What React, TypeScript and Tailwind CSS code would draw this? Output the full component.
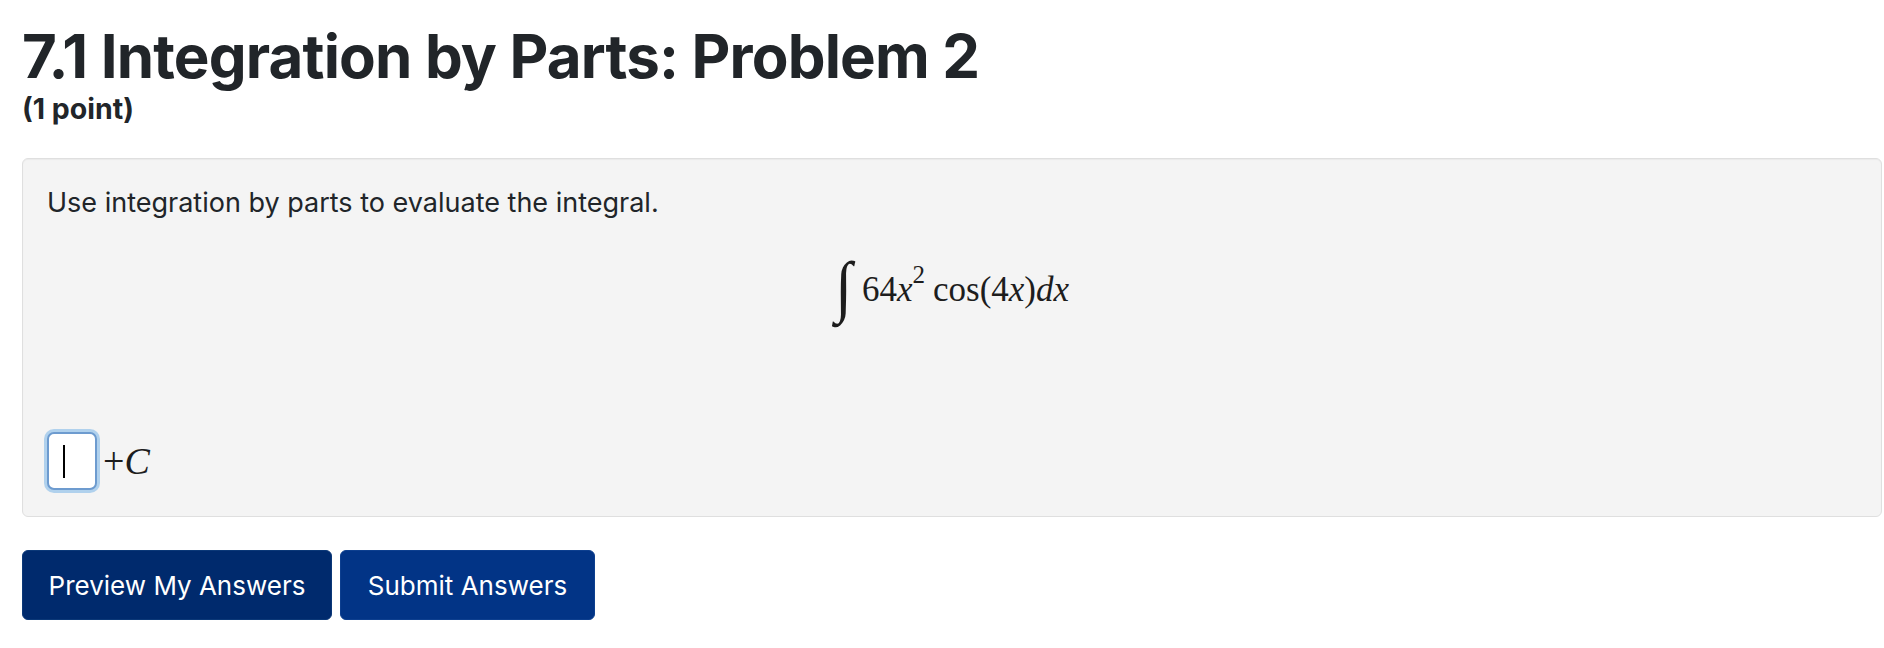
import React from "react"

const sans = { fontFamily: "Inter, 'Noto Sans', sans-serif" }
const serif = { fontFamily: "'Liberation Serif', 'DejaVu Serif', serif" }

const MathI = ({ children }: { children: React.ReactNode }) => (
  <span className="italic">{children}</span>
)

const App = () => {
  return (
    <div
      className="w-full h-[648px] bg-white text-[#212529] pl-[22px] pr-[2px] overflow-hidden"
      style={sans}
    >
      <h2 className="pt-[20px] text-[60px] leading-[72px] font-bold tracking-[-0.014em]">
        7.1 Integration by Parts: Problem 2
      </h2>
      <div className="mt-[1px] text-[28.5px] leading-[31px] font-bold">(1 point)</div>

      <div className="mt-[34px] h-[359px] bg-[#f4f4f4] border border-[#dfdfdf] rounded-[6px] pt-[24px] pl-[24px] shadow-[inset_0_1px_1px_rgba(0,0,0,0.04)]">
        <p className="text-[27px] leading-[40px]">
          Use integration by parts to evaluate the integral.
        </p>

        <div className="mt-[31px] h-[70px] flex justify-center items-center pr-[24px]">
          <div className="flex items-center text-[35px] leading-none text-[#1d1d1d]" style={serif}>
            <span className="text-[62px] leading-none -mt-[6px] mr-[10px] italic scale-y-[1.1]">
              ∫
            </span>
            <span>64</span>
            <MathI>x</MathI>
            <sup className="text-[25px] -top-[14px] relative align-baseline">2</sup>
            <span className="ml-[8px]">cos(4</span>
            <MathI>x</MathI>
            <span>)</span>
            <MathI>dx</MathI>
          </div>
        </div>

        <div className="mt-[108px] flex items-center">
          <div className="w-[50px] h-[58px] rounded-[7px] border-2 border-[#6d9bcf] bg-white shadow-[0_0_0_3px_rgba(120,180,232,0.55)] flex items-center pl-[14px]">
            <div className="w-[2px] h-[33px] bg-black" />
          </div>
          <div className="ml-[6px] text-[38px] leading-none text-[#1d1d1d]" style={serif}>
            +<span className="italic">C</span>
          </div>
        </div>
      </div>

      <div className="mt-[33px] flex gap-[8px]">
        <button className="w-[310px] h-[70px] rounded-[6px] bg-[#002a6d] border border-[#0b3878] text-white text-[26px]">
          Preview My Answers
        </button>
        <button className="w-[255px] h-[70px] rounded-[6px] bg-[#023486] border border-[#0d3f8f] text-white text-[26px]">
          Submit Answers
        </button>
      </div>
    </div>
  )
}

export default App
